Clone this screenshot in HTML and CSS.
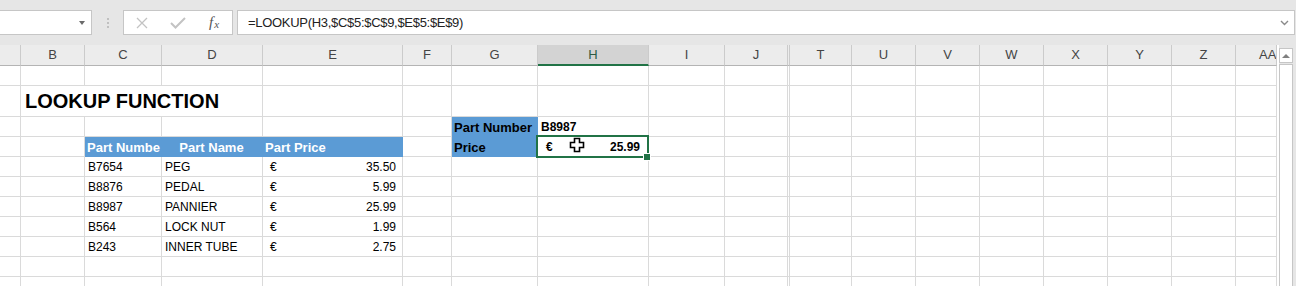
FILE: index.html
```html
<!DOCTYPE html>
<html lang="en">
<head>
  <meta charset="UTF-8" />
  <title>LOOKUP function</title>
  <link rel="stylesheet" href="styles.css">
</head>
<body>

  <!-- Name box + formula bar -->
  <div class="formula-bar">
    <div class="name-box"><span class="caret"></span></div>
    <div class="grip">
      <svg width="4" height="12" viewBox="0 0 4 12"><circle cx="2" cy="2" r="1" /><circle cx="2" cy="6" r="1" /><circle cx="2" cy="10" r="1" /></svg>
    </div>
    <div class="fx-box">
      <span class="fx-slot">
        <svg width="12" height="12" viewBox="0 0 12 12"><path d="M1 1 L11 11 M11 1 L1 11" /></svg>
      </span>
      <span class="fx-slot">
        <svg width="16" height="12" viewBox="0 0 16 12"><path class="tick" d="M1 6 L5.5 10.5 L15 1" /></svg>
      </span>
      <span class="fx-slot fx-label"><i>f</i><small>x</small></span>
    </div>
    <div class="formula-input">
      <span class="formula-text">=LOOKUP(H3,$C$5:$C$9,$E$5:$E$9)</span>
      <svg class="expand" width="9" height="6" viewBox="0 0 9 6"><path d="M1 1 L4.5 4.5 L8 1" /></svg>
    </div>
  </div>

  <!-- Worksheet -->
  <div class="sheet">
    <div class="grid" id="grid">
      <div class="selection"><span class="fill-handle"></span></div>
      <svg class="cursor" width="16" height="16" viewBox="0 0 16 16">
        <path d="M5.5 1.5 H10.5 V5.5 H14.5 V10.5 H10.5 V14.5 H5.5 V10.5 H1.5 V5.5 H5.5 Z" />
      </svg>
    </div>
    <div class="vscroll">
      <div class="scroll-up"><span class="up-arrow"></span></div>
      <div class="scroll-thumb"></div>
    </div>
  </div>

  <script>
    const columns = ['A', 'B', 'C', 'D', 'E', 'F', 'G', 'H', 'I', 'J', '', 'T', 'U', 'V', 'W', 'X', 'Y', 'Z', 'AA'];

    // one line of the parts table
    function part(code, name, price) {
      return { C: { text: code }, D: { text: name }, E: { price: price } };
    }

    const rows = [
      {},
      { B: { text: 'LOOKUP FUNCTION', cls: 'title', span: 3 } },
      { G: { text: 'Part Number', cls: 'label' }, H: { text: 'B8987', cls: 'strong' } },
      {
        // header text is cut by the next cell, as in the sheet
        C: { text: 'Part Numbe', cls: 'th' },
        D: { text: 'Part Name', cls: 'th center' },
        E: { text: 'Part Price', cls: 'th' },
        G: { text: 'Price', cls: 'label' },
        H: { price: '25.99', cls: 'strong' }
      },
      part('B7654', 'PEG', '35.50'),
      part('B8876', 'PEDAL', '5.99'),
      part('B8987', 'PANNIER', '25.99'),
      part('B564', 'LOCK NUT', '1.99'),
      part('B243', 'INNER TUBE', '2.75'),
      {},
      {}
    ];

    const grid = document.getElementById('grid');
    const frag = document.createDocumentFragment();

    // column headers
    columns.forEach((col, i) => {
      const head = document.createElement('div');
      head.className = 'col-head';
      if (col === '') head.classList.add('gap');
      if (col === 'H') head.classList.add('active');
      if (i === columns.length - 1) head.classList.add('partial');
      if (i > 0) head.textContent = col;
      frag.appendChild(head);
    });

    // cells
    rows.forEach(row => {
      for (let i = 0; i < columns.length; i++) {
        const col = columns[i];
        const data = col ? row[col] : null;
        const cell = document.createElement('div');
        cell.className = 'cell';
        if (col === '') cell.classList.add('gap');

        if (data) {
          if (data.cls) data.cls.split(' ').forEach(c => cell.classList.add(c));
          if (data.price) {
            cell.classList.add('money');
            cell.innerHTML = '<span>€</span><span>' + data.price + '</span>';
          } else {
            cell.textContent = data.text;
          }
          if (data.span) {
            cell.style.gridColumn = 'span ' + data.span;
            i += data.span - 1;
          }
        }
        frag.appendChild(cell);
      }
    });

    grid.insertBefore(frag, grid.firstChild);
  </script>
</body>
</html>
```

FILE: styles.css
```css
body {
  margin: 0;
  width: 1296px;
  height: 286px;
  overflow: hidden;
  background: #fff;
  font-family: "Liberation Sans", Arial, sans-serif;
  color: #000;
}

/* formula bar */
.formula-bar {
  height: 45px;
  box-sizing: border-box;
  padding-top: 10px;
  background: #e6e6e6;
  display: flex;
  align-items: flex-start;
}
.name-box {
  width: 92px;
  height: 25px;
  box-sizing: border-box;
  background: #fff;
  border: 1px solid #c6c6c6;
  border-left: none;
  display: flex;
  align-items: center;
  justify-content: flex-end;
  padding-right: 6px;
}
.caret {
  width: 0;
  height: 0;
  border-left: 3.5px solid transparent;
  border-right: 3.5px solid transparent;
  border-top: 4px solid #6a6a6a;
}
.grip {
  width: 31px;
  height: 25px;
  display: flex;
  align-items: center;
  justify-content: center;
}
.grip svg {
  fill: #b3b3b3;
}
.fx-box {
  height: 25px;
  box-sizing: border-box;
  background: #fff;
  border: 1px solid #c6c6c6;
  display: flex;
}
.fx-slot {
  width: 36px;
  display: flex;
  align-items: center;
  justify-content: center;
}
.fx-slot svg path {
  fill: none;
  stroke: #c3c3c3;
  stroke-width: 1.3;
}
.fx-slot svg path.tick {
  stroke-width: 2;
}
.fx-label {
  font-family: "Liberation Serif", "Times New Roman", serif;
  color: #555;
  font-size: 15px;
}
.fx-label small {
  font-size: 11px;
  font-style: italic;
  margin-left: 1px;
  margin-top: 3px;
}
.formula-input {
  flex: 1;
  margin-left: 4px;
  margin-right: 1px;
  height: 25px;
  box-sizing: border-box;
  background: #fff;
  border: 1px solid #c6c6c6;
  padding: 0 5px 0 10px;
  display: flex;
  align-items: center;
  justify-content: space-between;
}
.formula-text {
  font-size: 13px;
  letter-spacing: -0.3px;
  color: #222;
}
.expand path {
  fill: none;
  stroke: #8a8a8a;
  stroke-width: 1.4;
}

/* worksheet */
.sheet {
  display: flex;
  height: 241px;
  overflow: hidden;
}
.grid {
  position: relative;
  display: grid;
  grid-template-columns: 21px 64px 77px 101px 140px 49px 86px 111px 76px 63px 2px 62px repeat(6, 64px) 41px;
  grid-template-rows: 21px 20px 31px;
  grid-auto-rows: 20px;
}
.col-head {
  box-sizing: border-box;
  background: #ececec;
  border-right: 1px solid #cbcbcb;
  border-bottom: 1px solid #b4b4b4;
  font-size: 13px;
  line-height: 20px;
  text-align: center;
  color: #444;
  overflow: hidden;
  white-space: nowrap;
}
.col-head.active {
  background: #d3d3d3;
  color: #2b5c44;
  border-bottom: 2px solid #217346;
}
/* last column is cut by the scrollbar, so its label sits off-centre */
.col-head.partial {
  text-align: left;
  padding-left: 23px;
}
.cell {
  box-sizing: border-box;
  border-right: 1px solid #dadada;
  border-bottom: 1px solid #dadada;
  padding: 1px 3px 0;
  font-size: 12px;
  line-height: 19px;
  white-space: nowrap;
  overflow: hidden;
}
.cell.gap {
  padding: 0;
}
.cell.title {
  font-size: 20px;
  font-weight: bold;
  line-height: 29px;
  padding-left: 4px;
}
.cell.th {
  background: #5b9bd5;
  border-color: #5b9bd5;
  color: #fff;
  font-weight: bold;
  font-size: 13px;
  padding-left: 2px;
}
.cell.center {
  text-align: center;
}
.cell.label {
  background: #5b9bd5;
  border-color: #5b9bd5;
  font-weight: bold;
  font-size: 13px;
  padding-left: 2px;
}
.cell.strong {
  font-weight: bold;
}
.cell.money {
  display: flex;
  justify-content: space-between;
  padding: 1px 6px 0 7px;
}
.cell.money.strong {
  padding: 1px 8px 0 8px;
}

/* active cell */
.selection {
  position: absolute;
  grid-column: 8 / 9;
  grid-row: 5 / 6;
  left: -2px;
  top: -2px;
  right: 0;
  bottom: -1px;
  border: 2px solid #217346;
  pointer-events: none;
}
.fill-handle {
  position: absolute;
  right: -4px;
  bottom: -5px;
  width: 6px;
  height: 6px;
  background: #217346;
  border: 1px solid #fff;
}
.cursor {
  position: absolute;
  grid-column: 8 / 9;
  grid-row: 5 / 6;
  left: 31px;
  top: 0;
}
.cursor path {
  fill: #fff;
  stroke: #000;
  stroke-width: 1.6;
}

/* vertical scrollbar */
.vscroll {
  width: 17px;
  margin-left: 2px;
  background: #e6e6e6;
  padding-top: 3px;
  box-sizing: border-box;
}
.scroll-up {
  width: 14px;
  height: 15px;
  box-sizing: border-box;
  background: #fff;
  border: 1px solid #c6c6c6;
  display: flex;
  align-items: center;
  justify-content: center;
}
.up-arrow {
  width: 0;
  height: 0;
  border-left: 4px solid transparent;
  border-right: 4px solid transparent;
  border-bottom: 4px solid #808080;
}
.scroll-thumb {
  width: 14px;
  height: 240px;
  box-sizing: border-box;
  margin-top: 1px;
  background: #fff;
  border: 1px solid #c6c6c6;
}
```
